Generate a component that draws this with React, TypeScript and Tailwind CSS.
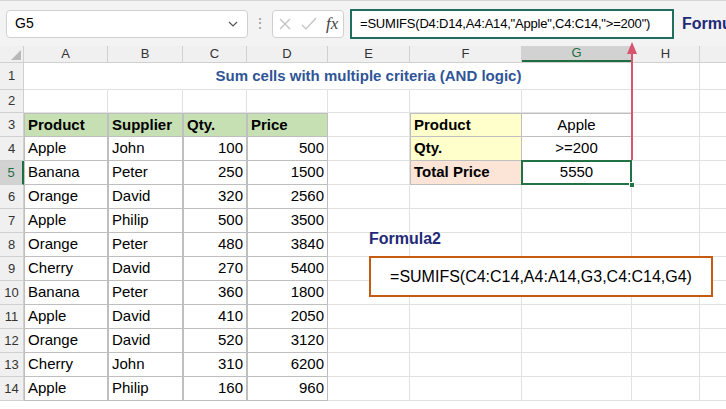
import React from 'react';

const cols = ['A', 'B', 'C', 'D', 'E', 'F', 'G', 'H', ''];
const colW = [84, 75, 64, 81, 82, 112, 110, 68, 50];
const rowH = [27, 23, 24, 24, 24, 24, 24, 24, 24, 24, 24, 24, 24, 24];

const data = [
  ['Apple', 'John', '100', '500'],
  ['Banana', 'Peter', '250', '1500'],
  ['Orange', 'David', '320', '2560'],
  ['Apple', 'Philip', '500', '3500'],
  ['Orange', 'Peter', '480', '3840'],
  ['Cherry', 'David', '270', '5400'],
  ['Banana', 'Peter', '360', '1800'],
  ['Apple', 'David', '410', '2050'],
  ['Orange', 'David', '520', '3120'],
  ['Cherry', 'John', '310', '6200'],
  ['Apple', 'Philip', '160', '960'],
];

function cellContent(r: number, c: number): { text?: string; cls: string } {
  const base = 'shrink-0 border-r border-b border-[#e1e1e1] flex items-center px-[3px] text-[15px] overflow-visible whitespace-nowrap';
  if (r === 1 && c === 4) return { text: 'Sum cells with multiple criteria (AND logic)', cls: base + ' justify-center font-bold text-[#2f5597] border-r-transparent' };
  if (r === 1 && c < 7) return { cls: base + ' border-r-transparent' };
  if (r === 3 && c < 4) {
    return { text: ['Product', 'Supplier', 'Qty.', 'Price'][c], cls: base + ' text-black bg-[#c6e0b4] font-bold !border-[#bfbfbf] border-l border-t' };
  }
  if (r >= 4 && c < 4) {
    return { text: data[r - 4][c], cls: base + ' text-black !border-[#bfbfbf] border-l' + (c >= 2 ? ' justify-end' : '') };
  }
  if (r === 3 && c === 5) return { text: 'Product', cls: base + ' text-black bg-[#ffffcc] font-bold !border-[#bfbfbf] border-l border-t' };
  if (r === 4 && c === 5) return { text: 'Qty.', cls: base + ' text-black bg-[#ffffcc] font-bold !border-[#bfbfbf] border-l' };
  if (r === 5 && c === 5) return { text: 'Total Price', cls: base + ' text-black bg-[#fce4d6] font-bold !border-[#bfbfbf] border-l' };
  if (r === 3 && c === 6) return { text: 'Apple', cls: base + ' text-black justify-center !border-[#bfbfbf] border-t' };
  if (r === 4 && c === 6) return { text: '>=200', cls: base + ' text-black justify-center !border-[#bfbfbf]' };
  if (r === 5 && c === 6) return { text: '5550', cls: base + ' text-black justify-center relative' };
  return { cls: base };
}

export default function App() {
  return (
    <div className="relative w-[726px] h-[409px] overflow-hidden bg-white" style={{ fontFamily: 'Arial, "Liberation Sans", sans-serif' }}>
      {/* formula bar */}
      <div className="h-[46px] bg-[#f3f3f3] border-t border-[#d6d6d6] flex items-center gap-[6px] pl-[6px] whitespace-nowrap">
        <div className="shrink-0 w-[242px] h-[28px] bg-white border border-[#d0d0d0] rounded flex items-center justify-between px-2 text-[14px] text-black">
          <span>G5</span>
          <svg width="12" height="12" viewBox="0 0 12 12"><path d="M2 4l4 4 4-4" fill="none" stroke="#555" strokeWidth="1.2" /></svg>
        </div>
        <span className="shrink-0 text-[#999] text-[14px] -mx-[1px]">⋮</span>
        <div className="shrink-0 w-[72px] h-[28px] bg-white border border-[#d0d0d0] rounded flex items-center justify-around">
          <svg width="14" height="14" viewBox="0 0 14 14"><path d="M2 2l10 10M12 2L2 12" stroke="#c0c0c0" strokeWidth="1.2" /></svg>
          <svg width="16" height="14" viewBox="0 0 16 14"><path d="M1 8l4 4 10-11" fill="none" stroke="#c0c0c0" strokeWidth="1.2" /></svg>
          <span className="italic text-[#444] text-[17px]" style={{ fontFamily: '"Liberation Serif", serif' }}>fx</span>
        </div>
        <div className="shrink-0 w-[324px] h-[30px] border-2 border-[#1f6e5e] bg-white flex items-center px-[8px] text-[13px] tracking-[-0.2px] text-black">
          =SUMIFS(D4:D14,A4:A14,"Apple",C4:C14,"&gt;=200")
        </div>
        <span className="shrink-0 ml-[2px] text-[#1f2a78] font-bold text-[16px]">Formula1</span>
      </div>

      {/* column headers */}
      <div className="flex h-[17px] bg-[#f0f0f0] border-b border-[#d0d0d0]">
        <div className="shrink-0 w-[24px] border-r border-[#d0d0d0] relative">
          <svg className="absolute right-[2px] bottom-[2px]" width="10" height="10" viewBox="0 0 10 10"><path d="M10 0L10 10L0 10Z" fill="#b8b8b8" /></svg>
        </div>
        {cols.map((c, i) => (
          <div
            key={i}
            style={{ width: colW[i] }}
            className={c === 'G'
              ? 'shrink-0 flex items-center justify-center text-[13px] text-[#1f6e43] bg-[#d2d2d2] border-r border-[#d0d0d0] border-b-2 border-b-[#1f6e43]'
              : 'shrink-0 flex items-center justify-center text-[13px] text-[#333] border-r border-[#d0d0d0]'}
          >{c}</div>
        ))}
      </div>

      {/* rows */}
      {rowH.map((h, ri) => {
        const r = ri + 1;
        return (
          <div key={r} className="flex" style={{ height: h }}>
            <div className={r === 5
              ? 'shrink-0 w-[24px] flex items-center justify-center text-[13px] text-[#1f6e43] bg-[#d2d2d2] border-r-2 border-r-[#1f6e43] border-b border-[#d0d0d0]'
              : 'shrink-0 w-[24px] flex items-center justify-center text-[13px] text-[#333] bg-[#f0f0f0] border-r border-b border-[#d0d0d0]'}>{r}</div>
            {cols.map((_, c) => {
              const { text, cls } = cellContent(r, c);
              return (
                <div key={c} style={{ width: colW[c] }} className={cls}>
                  {text}
                  {r === 5 && c === 6 && (
                    <>
                      <div className="absolute -left-[1px] -top-[1px] -right-[1px] -bottom-[1px] border-2 border-[#217346]" />
                      <div className="absolute -right-[4px] -bottom-[4px] w-[6px] h-[6px] bg-[#217346] border border-white" />
                    </>
                  )}
                </div>
              );
            })}
          </div>
        );
      })}

      {/* arrow */}
      <svg className="absolute left-[626px] top-[38px]" width="12" height="124" viewBox="0 0 12 124">
        <path d="M6 4L1 16H11Z" fill="#d9546e" />
        <line x1="6" y1="14" x2="6" y2="122" stroke="#d9546e" strokeWidth="2" />
      </svg>

      {/* formula2 */}
      <div className="absolute left-[369px] top-[227px] text-[#1f2a78] font-bold text-[16px]">Formula2</div>
      <div className="absolute left-[369px] top-[256px] w-[344px] h-[41px] border-2 border-[#c55a11] bg-white flex items-center justify-center text-[16px] text-black">
        =SUMIFS(C4:C14,A4:A14,G3,C4:C14,G4)
      </div>
    </div>
  );
}
